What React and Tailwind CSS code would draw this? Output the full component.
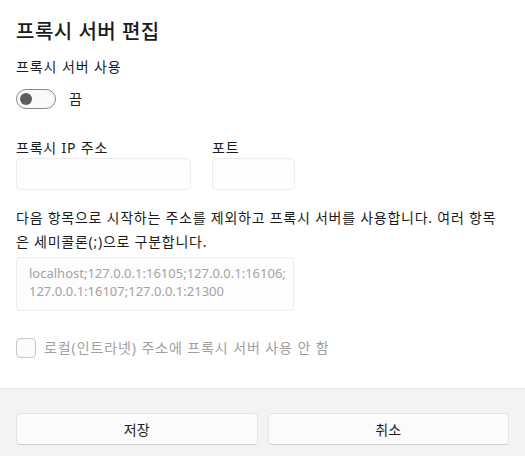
export default function App() {
  const font = { fontFamily: '"Noto Sans", "Noto Sans CJK KR", sans-serif' };

  return (
    <div style={font} className="w-[525px] h-[456px] bg-white text-[#1b1b1b] flex flex-col overflow-hidden">
      <div className="flex-1 px-4 pt-[18px]">
        <h1 className="text-[20px] leading-[28px] font-medium tracking-[0.5px]">프록시 서버 편집</h1>

        <p className="mt-[11px] text-[14px] leading-[20px] tracking-[0.9px]">프록시 서버 사용</p>

        <div className="mt-[12px] flex items-center">
          <button className="w-10 h-5 rounded-full border border-[#8a8a8a] bg-[#f9f9f9] flex items-center px-[3px]">
            <span className="w-3 h-3 rounded-full bg-[#5d5d5d]" />
          </button>
          <span className="ml-[13px] text-[14px] leading-[20px]">끔</span>
        </div>

        <div className="mt-[29px] flex gap-[21px] tracking-[0.8px]">
          <div className="flex flex-col">
            <label className="text-[14px] leading-[20px]">프록시 IP 주소</label>
            <input className="w-[175px] h-8 rounded-[4px] border border-[#ececec] bg-[#fdfdfd] outline-none" />
          </div>
          <div className="flex flex-col">
            <label className="text-[14px] leading-[20px]">포트</label>
            <input className="w-[83px] h-8 rounded-[4px] border border-[#ececec] bg-[#fdfdfd] outline-none" />
          </div>
        </div>

        <p className="mt-4 text-[14px] leading-[24px] tracking-[0.75px] whitespace-nowrap">
          다음 항목으로 시작하는 주소를 제외하고 프록시 서버를 사용합니다. 여러 항목
          <br />
          은 세미콜론(;)으로 구분합니다.
        </p>

        <div className="mt-[3px] w-[278px] h-[54px] rounded-[4px] border border-[#ececec] bg-[#fdfdfd] px-3 pt-[6px] text-[13px] leading-[18px] text-[#a3a3a3]">
          localhost;127.0.0.1:16105;127.0.0.1:16106;
          <br />
          127.0.0.1:16107;127.0.0.1:21300
        </div>

        <div className="mt-[27px] flex items-center">
          <span className="w-5 h-5 rounded-[4px] border border-[#c8c8c8] bg-[#fbfbfb]" />
          <span className="ml-[8px] text-[14px] leading-[20px] tracking-[0.9px] text-[#a0a0a0]">
            로컬(인트라넷) 주소에 프록시 서버 사용 안 함
          </span>
        </div>
      </div>

      <div className="h-[68px] shrink-0 border-t border-[#e5e5e5] bg-[#f3f3f3] px-4 pt-6 flex gap-2.5 items-start">
        <button className="flex-1 h-8 rounded-[4px] bg-[#fbfbfb] border border-[#e5e5e5] border-b-[#cfcfcf] text-[14px]">
          저장
        </button>
        <button className="flex-1 h-8 rounded-[4px] bg-[#fbfbfb] border border-[#e5e5e5] border-b-[#cfcfcf] text-[14px]">
          취소
        </button>
      </div>
    </div>
  );
}
